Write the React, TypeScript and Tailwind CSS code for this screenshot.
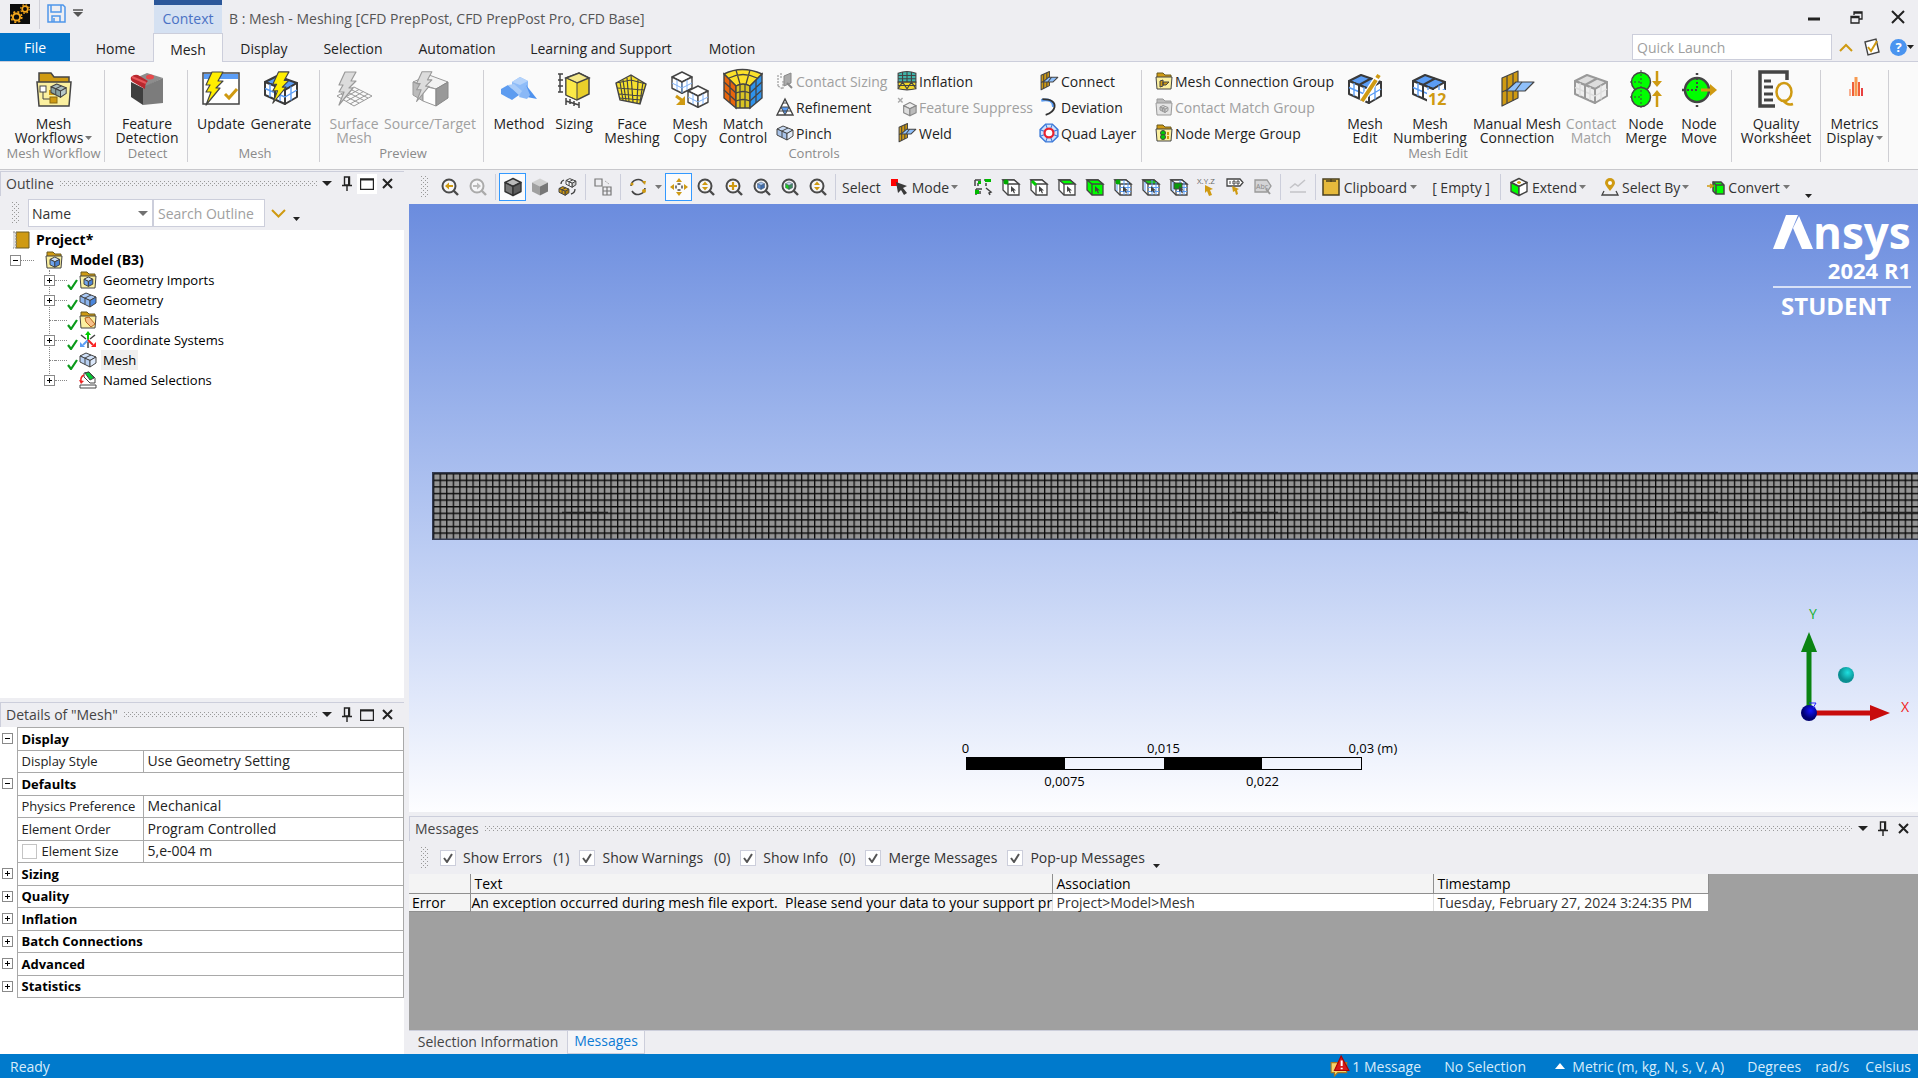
import { useId, type ReactNode } from "react";

const K = "#444444";
const GOLD = "#cf9a12";
const BLUE = "#5b9df5";
const PALE = "#fbf0a0";
const GREEN = "#00ff00";

type IconProps = { size?: string; box?: number; children: ReactNode };

function Ico({ size = "size-[18px]", box = 18, children }: IconProps) {
  return (
    <svg className={`${size} shrink-0 overflow-visible`} viewBox={`0 0 ${box} ${box}`} fill="none" aria-hidden="true">
      {children}
    </svg>
  );
}

function Big({ children }: { children: ReactNode }) {
  return (
    <Ico size="size-[38px]" box={38}>
      {children}
    </Ico>
  );
}

type CubeProps = { x?: number; y?: number; s?: number; top?: string; left?: string; right?: string; line?: string; w?: number };

function Cube({ x = 0, y = 0, s = 1, top = "#ddd", left = "#bbb", right = "#888", line = K, w = 1 }: CubeProps) {
  return (
    <g transform={`translate(${x} ${y}) scale(${s})`} stroke={line} strokeWidth={w / s} strokeLinejoin="round">
      <path d="M8 0 16 4 8 8 0 4Z" fill={top} />
      <path d="M0 4 8 8V17L0 13Z" fill={left} />
      <path d="M16 4 8 8V17L16 13Z" fill={right} />
    </g>
  );
}

function Brick({ x = 0, y = 0, s = 1, top = "#cfe0f8", left = "#b8d0f2", right = "#dce8fa", line = K, w = 1 }: CubeProps) {
  return (
    <g transform={`translate(${x} ${y}) scale(${s})`} stroke={line} strokeWidth={w / s} strokeLinejoin="round">
      <path d="M0 4 6 1 16 5 10 8.500Z" fill={top} />
      <path d="M0 4 10 8.500V15L0 10Z" fill={left} />
      <path d="M16 5V11L10 15V8.500Z" fill={right} />
      <path d="M5 6 11 3M5 6V12.500" />
    </g>
  );
}

function Folder({ children, gray }: { children?: ReactNode; gray?: boolean }) {
  return (
    <Ico>
      <path d="M2 6V1H8L10 3H16V6" fill={gray ? "#bbb" : GOLD} stroke={gray ? "#999" : "#6b5a20"} />
      <path d="M1 5H17L16 17H2Z" fill={gray ? "#e4e4e4" : PALE} stroke={gray ? "#999" : K} />
      {children}
    </Ico>
  );
}

function Bolt({ gray }: { gray?: boolean }) {
  return (
    <path
      d="M10 2H21L16 11H21L14 18H18L4 35L9 22H4L8 15H4Z"
      fill={gray ? "#dcdcdc" : "#ffee00"}
      stroke={gray ? "#999" : K}
      strokeWidth="1.2"
      strokeLinejoin="round"
    />
  );
}

function MeshBlock({ x = 0, y = 0, gray, children }: { x?: number; y?: number; gray?: boolean; children?: ReactNode }) {
  const c = gray ? "#999" : "#3a3a3a";
  const f = gray ? "#ddd" : BLUE;
  return (
    <g transform={`translate(${x} ${y})`} strokeLinejoin="round">
      <path d="M2 8 14 2 34 9 22 16Z" fill={f} stroke={c} strokeWidth="2" />
      <path d="M2 8 22 16V30L2 21Z" fill={gray ? "#eee" : "#fff"} stroke={c} strokeWidth="2" />
      <path d="M34 9V23L22 30V16Z" fill={gray ? "#eee" : "#fff"} stroke={c} strokeWidth="2" />
      <path d="M2 14.500 22 23M7 10V23M17 14V27M28 12.500V26.500M22 23 34 16" stroke={f} strokeWidth="1.400" />
      <path d="M12 12 24 5.500M12 12V25.500" stroke={c} strokeWidth="2" />
      {children}
    </g>
  );
}

function Plates({ small }: { small?: boolean }) {
  return (
    <g transform={small ? "scale(.47)" : undefined} stroke={K} strokeWidth={small ? 2 : 1.2} strokeLinejoin="round">
      <path d="M4 8 20 1V28L4 36Z" fill={GOLD} />
      <path d="M9 6V33M15 3.500V30.500M4 22 20 15" />
      <path d="M8 21 18 12H36L27 21Z" fill="#8fc0fb" />
      <path d="M17 21 24 12" />
    </g>
  );
}

function Lens({ children, gray }: { children?: ReactNode; gray?: boolean }) {
  const c = gray ? "#aaa" : "#4a4a4a";
  return (
    <Ico>
      <circle cx="8" cy="8" r="6.500" stroke={c} strokeWidth="2" fill="#f6f6f8" />
      <path d="M12.500 12.500 17 17" stroke={c} strokeWidth="2.400" />
      {children}
    </Ico>
  );
}

function SelBox({ children, fill = "#fff", top, grid }: { children?: ReactNode; fill?: string; top?: string; grid?: boolean }) {
  return (
    <Ico>
      <path d="M1 2H12L17 6V17H6L1 12Z" fill={fill} stroke={K} strokeWidth="1.300" />
      <path d="M1 2H12L17 6H6Z" fill={top ?? fill} stroke={K} strokeWidth="1.300" />
      <path d="M6 6V17" stroke={K} strokeWidth="1.300" />
      {grid && <path d="M6 9.500H17M6 13.500H17M10 2V17M14 4V17M3 4V13" stroke={BLUE} />}
      {children}
      <path d="M9 8V14L10.500 12.800 12 15.500 13 15 11.800 12.500H14Z" fill={K} />
    </Ico>
  );
}

function Caret({ light }: { light?: boolean }) {
  return (
    <svg className="h-[4px] w-[7px] shrink-0" viewBox="0 0 7 4" aria-hidden="true">
      <path d="M0 0H7L3.500 4Z" fill={light ? "#777" : "#222"} />
    </svg>
  );
}

function Dots({ className }: { className: string }) {
  const id = useId();
  return (
    <svg className={className} aria-hidden="true">
      <defs>
        <pattern id={id} width="4" height="4" patternUnits="userSpaceOnUse">
          <rect width="1" height="1" fill="#999" />
          <rect x="2" y="2" width="1" height="1" fill="#999" />
        </pattern>
      </defs>
      <rect width="100%" height="100%" fill={`url(#${id})`} />
    </svg>
  );
}

function BigButton({ icon, lines, width, off, menu }: { icon: ReactNode; lines: string[]; width: string; off?: boolean; menu?: boolean }) {
  return (
    <button
      type="button"
      disabled={off}
      className={`${width} flex h-[80px] shrink-0 flex-col items-center whitespace-nowrap text-[14px] leading-[14px] ${off ? "text-[#a0a0a0]" : "text-[#1e1e1e]"}`}
    >
      <span className="mb-[9px]">{icon}</span>
      {lines.map((l, i) => (
        <span key={l} className="flex items-center gap-[2px]">
          {l}
          {menu && i === lines.length - 1 && <Caret light />}
        </span>
      ))}
    </button>
  );
}

function SmallButton({ icon, label, off }: { icon: ReactNode; label: string; off?: boolean }) {
  return (
    <button type="button" disabled={off} className={`flex h-[26px] items-center gap-[2px] whitespace-nowrap text-[14px] ${off ? "text-[#a0a0a0]" : "text-[#1e1e1e]"}`}>
      {icon}
      {label}
    </button>
  );
}

function Group({ label, width, children, className = "" }: { label?: string; width: string; children: ReactNode; className?: string }) {
  return (
    <section className={`${width} flex h-[92px] shrink-0 flex-col border-r border-[#cfcfd4]`} aria-label={label}>
      <div className={`flex h-[75px] ${className}`}>{children}</div>
      <div className="pl-[3px] text-center text-[13px] leading-[16px] whitespace-nowrap text-[#8a8a8a]">{label}</div>
    </section>
  );
}

const folderIcon = (
  <Big>
    <path d="M4 13V3H16L19 7H34V13" fill={GOLD} stroke={K} strokeWidth="1.500" />
    <path d="M2 12H36L34 36H4Z" fill={PALE} stroke={K} strokeWidth="1.500" />
    <rect x="5" y="16" width="6" height="6" fill="#fff" stroke={K} />
    <path d="M8 22V29H15" stroke={K} />
    <rect x="15" y="27" width="7" height="6" fill={GOLD} stroke="#8a6a10" />
    <rect x="14" y="20" width="6" height="5" fill={GOLD} />
    <Brick x={16} y={13} s={0.95} top="#a9bcbc" left="#8aa3a3" right="#b9c9c9" />
  </Big>
);
const featureIcon = (
  <Big>
    <path d="M3 10 19 3 35 8 17 17Z" fill="#8d8d8d" />
    <path d="M3 12 15 18V35L3 27Z" fill="#3f3f3f" />
    <path d="M15 17 35 8V33L15 35Z" fill="#7c7c7c" />
    <path d="M3 7Q6 4 10 5L20 11Q17 13 17 19L5 12Q2 10 3 7Z" fill="#b8282e" />
    <path d="M4 7 18 13" stroke="#e8575b" strokeWidth="2" />
    <ellipse cx="22" cy="7" rx="4" ry="2.500" fill="#e8494c" />
  </Big>
);
const updateIcon = (
  <Big>
    <rect x="1" y="3" width="36" height="31" fill="#fff" stroke={K} strokeWidth="1.500" />
    <path d="M2 4H36V9H2Z" fill={BLUE} />
    <path d="m23 24 4 4 8-9" stroke={GOLD} strokeWidth="3" />
    <Bolt />
  </Big>
);
const generateIcon = (
  <Big>
    <MeshBlock x={1} y={4} />
    <g transform="translate(7 0) scale(.95)">
      <Bolt />
    </g>
  </Big>
);
const surfaceIcon = (
  <Big>
    <path d="M2 26 19 17 37 26 19 36ZM6 24 24 33M11 21.500 29 30.500M15 19 33 28M7 29 24 19.500M11 31.500 28.500 21.500M15 34 33 24" stroke="#999" />
    <Bolt gray />
  </Big>
);
const sourceIcon = (
  <Big>
    <path d="M2 12 18 5 37 12 25 19Z" fill="#f3f3f3" stroke="#999" />
    <path d="M2 12 12 16V31L2 25Z" fill="#bbb" stroke="#999" />
    <path d="M12 16 25 19V36L12 31Z" fill="#fff" stroke="#999" />
    <path d="M37 12V28L25 36V19Z" fill="#999" stroke="#888" />
    <g transform="translate(2 0) scale(.9)">
      <Bolt gray />
    </g>
  </Big>
);
const methodIcon = (
  <Big>
    <path d="M12 12 20 7 28 11V22L20 26 12 22Z" fill="#8ebcf8" />
    <path d="M12 12 20 7 28 11 20 15Z" fill="#b5d3fa" />
    <path d="M1 19 8 15 19 25 12 30 1 24Z" fill="#5d9cf0" />
    <path d="M8 15 19 25 22 21 14 14Z" fill="#a9ccf9" />
    <path d="M26 15 37 29 27 27Z" fill="#4f92ee" />
    <path d="M26 15 19 27 27 29 30 25Z" fill="#8ab8f6" />
  </Big>
);
const sizingIcon = (
  <Big>
    <path d="M11 8 24 3 34 8V24L22 30 11 25Z" fill="#e9cf2a" stroke={K} strokeWidth="1.500" />
    <path d="M11 8 24 3 34 8 22 13Z" fill="#f5e98a" stroke={K} strokeWidth="1.500" />
    <path d="M11 8 22 13V30L11 25Z" fill="#fbe947" stroke={K} />
    <path d="M3 4H8M3 10H8M3 16H8M3 22H8M5 4V22M11 28V35M15 29V34M19 31V36M24 32V38M11 31 24 35" stroke={K} strokeWidth="1.500" />
  </Big>
);
const faceIcon = (
  <Big>
    <path d="M18 5 33 14 27 34 7 30 3 13Z" fill="#f6e02c" stroke={K} strokeWidth="1.400" />
    <path d="M4 18 31 20M5 24 29 26M10 10 13 31M18 5 20 32M25 10 24 33M3 13 18 10 33 14M6 28 28 30M14 8 16 32M30 12 27 33M7 12 10 30" stroke={K} strokeWidth="1.200" />
  </Big>
);
const copyIcon = (
  <Big>
    <Cube x={1} y={2} s={1.25} top="#fff" left="#fff" right="#fff" w={1.4} />
    <path d="M6 10V20M11 13V23M16 10V20M1 13 11 18 21 13" stroke="#7fb2f7" />
    <Cube x={17} y={16} s={1.25} top="#fff" left="#fff" right="#fff" w={1.4} />
    <path d="M22 24V34M32 24V34M17 27 27 32 37 27" stroke="#7fb2f7" />
    <path d="M5 26 12 31" stroke={GOLD} strokeWidth="3" />
    <path d="M14 26V35H5Z" fill={GOLD} />
  </Big>
);
const matchIcon = (
  <Ico size="size-[42px]" box={42}>
    <path d="M2 6Q20-3 40 6L28 18Q21 15 14 18Z" fill="#fbe12a" stroke={K} strokeWidth="1.400" />
    <path d="M2 6 14 18V40L2 30Z" fill="#e8650c" stroke={K} strokeWidth="1.400" />
    <path d="M14 18Q21 14 28 18V40H14Z" fill="#d9c424" stroke={K} strokeWidth="1.400" />
    <path d="M40 6V30L28 40V18Z" fill="#2f92ea" stroke={K} strokeWidth="1.400" />
    <path d="M2 14 14 25Q21 22 28 25L40 14M2 22 14 33Q21 30 28 33L40 22M8 12V35M34 12V35M18 16V40M23 16V40M7 10Q21 3 35 10M14 2 18 16M28 2 24 16" stroke={K} strokeWidth="1.300" />
  </Ico>
);
const nodeMergeIcon = (
  <Big>
    <circle cx="14" cy="12" r="9.500" fill={GREEN} stroke={K} strokeWidth="1.500" />
    <circle cx="14" cy="27" r="9.500" fill={GREEN} stroke={K} strokeWidth="1.500" />
    <path d="M14 0V38M3 12H14M3 27H14" stroke={K} strokeDasharray="2 2" />
    <path d="M30 1V12M30 37V25" stroke={GOLD} strokeWidth="2.500" />
    <path d="M25 11H35L30 17ZM25 26H35L30 20Z" fill={GOLD} />
  </Big>
);
const nodeMoveIcon = (
  <Big>
    <circle cx="17" cy="20" r="12" fill={GREEN} stroke={K} strokeWidth="2.500" />
    <path d="M17 8V20H7" stroke={K} strokeWidth="2" strokeDasharray="2 2" />
    <path d="M2 20H4M17 3V5M17 35V37" stroke={K} strokeWidth="2.500" />
    <path d="M21 20H31" stroke={GOLD} strokeWidth="3" />
    <path d="M30 14 37 20 30 26Z" fill={GOLD} />
  </Big>
);
const qualityIcon = (
  <Big>
    <path d="M30 10V2H3V36H18" stroke={K} strokeWidth="3.500" />
    <path d="M7 11H14M7 17H16M7 24H16M7 30H16" stroke={K} strokeWidth="3" />
    <ellipse cx="27" cy="22" rx="7.500" ry="9" stroke={GOLD} strokeWidth="2.500" fill="#fafafa" />
    <path d="M26 30Q30 36 36 34" stroke={GOLD} strokeWidth="2.500" />
  </Big>
);
const metricsIcon = (
  <Big>
    <path d="M14 19V26" stroke="#f9b090" strokeWidth="2" />
    <path d="M17 12V26M23 12V26" stroke="#f0603a" strokeWidth="2" />
    <path d="M20 7V26" stroke="#f79a50" strokeWidth="3" />
    <path d="M26 18V26" stroke="#e84040" strokeWidth="2" />
  </Big>
);

const tb = "flex h-[28px] w-[28px] shrink-0 items-center justify-center";
const tbOn = "flex h-[28px] w-[27px] shrink-0 items-center justify-center border border-[#3399ff] bg-[#fbfbfc]";
const tbText = "flex h-[28px] shrink-0 items-center whitespace-nowrap text-[14px] text-[#333]";

function Tool({ label, on, children }: { label: string; on?: boolean; children: ReactNode }) {
  return (
    <button type="button" aria-label={label} aria-pressed={on} className={on ? tbOn : tb}>
      {children}
    </button>
  );
}

function Sep() {
  return <span className="mx-[3px] h-[26px] w-px shrink-0 bg-[#cccedb]" />;
}

function Overflow() {
  return (
    <button type="button" aria-label="Toolbar options" className="flex h-[24px] w-[20px] items-end justify-center pb-[4px]">
      <Caret />
    </button>
  );
}

function PanelHeader({ title, max, tint }: { title: string; max?: boolean; tint?: boolean }) {
  return (
    <header className={`flex h-[25px] shrink-0 items-center border-t border-l border-[#cccedb] pb-px pl-[5px] text-[14px] text-[#444] ${max ? "pr-[7px]" : "pr-[5px]"}`}>
      <h2 className="mr-[6px] whitespace-nowrap">{title}</h2>
      <Dots className="h-[5px] min-w-0 flex-1" />
      <button type="button" aria-label="Window position" className="flex h-[20px] w-[20px] items-center justify-center">
        <svg className="h-[5px] w-[10px]" viewBox="0 0 10 5"><path d="M0 0H10L5 5Z" fill="#222" /></svg>
      </button>
      <button type="button" aria-label="Auto hide" className="flex h-[20px] w-[20px] items-center justify-center">
        <svg className="h-[15px] w-[10px]" viewBox="0 0 10 15" fill="none" stroke="#222" strokeWidth="1.400"><path d="M2.500 1H7.500V9H2.500ZM0 9.500H10M5 10V15M6.700 1V9" /></svg>
      </button>
      {max && (
        <button type="button" aria-label="Maximize" className={`flex h-[20px] w-[20px] items-center justify-center ${tint ? "bg-white" : ""}`}>
          <svg className="h-[12px] w-[14px]" viewBox="0 0 14 12" fill="none"><path d="M.6 1H13.400V11.400H.6Z" stroke="#222" strokeWidth="1.200" /><path d="M0 1.500H14" stroke="#222" strokeWidth="2" /></svg>
        </button>
      )}
      <button type="button" aria-label="Close" className="flex h-[20px] w-[20px] items-center justify-center">
        <svg className="size-[11px]" viewBox="0 0 11 11"><path d="M1 1 10 10M10 1 1 10" stroke="#222" strokeWidth="2" /></svg>
      </button>
    </header>
  );
}

function Expander({ open }: { open?: boolean }) {
  return (
    <button type="button" aria-label={open ? "Collapse" : "Expand"} className="size-[11px] shrink-0 border border-[#8a8a8a] bg-white">
      <svg className="size-[9px]" viewBox="0 0 9 9"><path d={open ? "M2 4.500H7" : "M2 4.500H7M4.500 2V7"} stroke="#000" /></svg>
    </button>
  );
}

const tree: { label: string; plus: boolean; check: boolean; active?: boolean; icon: ReactNode }[] = [
  { label: "Geometry Imports", plus: true, check: true, icon: <Folder><Cube x={5} y={6} s={0.55} top="#cfe0f8" left="#6fa4ee" right="#4a83d6" /></Folder> },
  { label: "Geometry", plus: true, check: true, icon: <Ico><Brick x={1} y={1} top="#a9c9f6" left="#8db6ef" right="#4a86dc" /></Ico> },
  { label: "Materials", plus: false, check: true, icon: <Folder><path d="M6 7 10 6 16 13 12 16 7 11Z" fill="#f6c08a" stroke="#b5651d" /></Folder> },
  {
    label: "Coordinate Systems", plus: true, check: true,
    icon: <Ico><path d="M9 9V2" stroke="#0c0" strokeWidth="2" /><path d="M6 4H12L9 0Z" fill="#0c0" /><path d="M9 9 4 14" stroke={BLUE} strokeWidth="2" /><path d="M1 11 6 16H1Z" fill={BLUE} /><path d="M9 9 14 14" stroke="#e22" strokeWidth="2" /><path d="M17 11 12 16H17Z" fill="#f22" /><path d="M2 4 7 8M16 4 11 8M9 11V17" stroke={K} strokeWidth="1.500" /></Ico>,
  },
  { label: "Mesh", plus: false, check: true, active: true, icon: <Ico><Brick x={1} y={1} /></Ico> },
  {
    label: "Named Selections", plus: true, check: false,
    icon: <Ico><path d="M1 14H17V17H1Z" fill="#fff" stroke={K} /><path d="M5 2 10 1 16 7V12H11L5 6Z" fill="#fff" stroke={K} /><path d="M6 2 10 1 15 7 11 9Z" fill="#0c3" stroke={K} /><path d="M5 4Q1 6 2 11" stroke="#e22" strokeWidth="1.500" /><path d="M0 9 2 13 5 10Z" fill="#e22" /></Ico>,
  },
];

type Detail = { head?: string; open?: boolean; name?: string; value?: string; box?: boolean };
const details: Detail[] = [
  { head: "Display", open: true },
  { name: "Display Style", value: "Use Geometry Setting" },
  { head: "Defaults", open: true },
  { name: "Physics Preference", value: "Mechanical" },
  { name: "Element Order", value: "Program Controlled" },
  { name: "Element Size", value: "5,e-004 m", box: true },
  { head: "Sizing" },
  { head: "Quality" },
  { head: "Inflation" },
  { head: "Batch Connections" },
  { head: "Advanced" },
  { head: "Statistics" },
];

function TitleBar() {
  return (
    <div className="flex h-[33px] shrink-0 items-stretch">
      <div className="flex w-[154px] items-start pl-[10px]">
        <svg className="mt-[4px] size-[20px]" viewBox="0 0 20 20" fill="none">
          <rect width="20" height="20" fill="#0c0c0c" />
          <circle cx="6.500" cy="13" r="3.600" stroke="#f2a51c" strokeWidth="2" />
          <circle cx="6.500" cy="13" r="5.300" stroke="#f2a51c" strokeWidth="1.600" strokeDasharray="2 2.200" />
          <circle cx="15" cy="5" r="2.800" stroke="#f2a51c" strokeWidth="1.700" />
          <circle cx="15" cy="5" r="4.300" stroke="#f2a51c" strokeWidth="1.200" strokeDasharray="1.600 1.800" />
        </svg>
        <span className="ml-[9px] h-[29px] w-px bg-[#d0d0d8]" />
        <button type="button" aria-label="Save" className="mt-[4px] ml-[7px]">
          <svg className="size-[19px]" viewBox="0 0 19 19" fill="none" stroke="#4f97ea" strokeWidth="1.500"><path d="M1 1H16L18 3V18H1ZM4 1V8H14V1M5 18V12H13V18M7 14V18" /></svg>
        </button>
        <button type="button" aria-label="Customize quick access" className="mt-[9px] ml-[7px]">
          <svg className="h-[8px] w-[10px]" viewBox="0 0 10 8"><path d="M0 1H10" stroke="#555" strokeWidth="1.500" /><path d="M0 3H10L5 8Z" fill="#555" /></svg>
        </button>
      </div>
      <div className="flex w-[68px] items-center justify-center border-t-[5px] border-[#2b579a] bg-[#d5e1f2] pb-[2px] text-[14px] text-[#4a72c4]">Context</div>
      <h1 className="flex items-center pt-[3px] pl-[7px] text-[14px] text-[#555]">B : Mesh - Meshing [CFD PrepPost, CFD PrepPost Pro, CFD Base]</h1>
      <div className="ml-auto flex items-center">
        <button type="button" aria-label="Minimize" className="flex w-[43px] justify-center"><svg className="h-[12px] w-[12px]" viewBox="0 0 12 12"><path d="M0 8H12" stroke="#222" strokeWidth="3" /></svg></button>
        <button type="button" aria-label="Restore" className="flex w-[43px] justify-center pt-[2px]"><svg className="size-[13px]" viewBox="0 0 13 13" fill="none" stroke="#222" strokeWidth="1.300"><path d="M4 4V1H12V8H9M1 5.500H9V12H1ZM1 6.500H9M4 2H12" /></svg></button>
        <button type="button" aria-label="Close window" className="flex w-[40px] justify-center"><svg className="size-[14px]" viewBox="0 0 14 14"><path d="M1 1 13 13M13 1 1 13" stroke="#222" strokeWidth="2" /></svg></button>
      </div>
    </div>
  );
}

function TabRow() {
  const t = "flex items-center justify-center whitespace-nowrap pt-[2px] text-[14px] text-[#222]";
  return (
    <nav className="flex h-[29px] shrink-0 border-b border-[#cccedb]" aria-label="Ribbon tabs">
      <button type="button" className="mr-[8px] w-[70px] bg-[#0173c7] text-[14px] text-white">File</button>
      <button type="button" className={`w-[75px] ${t}`}>Home</button>
      <button type="button" className={`-mb-px w-[70px] border-x border-t border-[#cccedb] bg-[#fafafa] ${t}`}>Mesh</button>
      <button type="button" className={`w-[82px] ${t}`}>Display</button>
      <button type="button" className={`w-[96px] ${t}`}>Selection</button>
      <button type="button" className={`w-[112px] ${t}`}>Automation</button>
      <button type="button" className={`w-[176px] ${t}`}>Learning and Support</button>
      <button type="button" className={`w-[86px] ${t}`}>Motion</button>
      <div className="ml-auto flex items-center pr-[4px]">
        <input aria-label="Quick Launch" placeholder="Quick Launch" className="mr-[5px] h-[26px] w-[200px] border border-[#cccedb] bg-white px-[4px] text-[14px] outline-none placeholder:text-[#a0a0a0]" />
        <button type="button" aria-label="Collapse ribbon" className="flex w-[18px] justify-center"><svg className="h-[9px] w-[14px]" viewBox="0 0 14 9" fill="none"><path d="M1 8 7 2 13 8" stroke={GOLD} strokeWidth="2" /></svg></button>
        <button type="button" aria-label="Options" className="ml-[8px]">
          <Ico><path d="M2 4 13 1 16 14 5 17Z" stroke={K} strokeWidth="1.400" fill="#fff" /><path d="m5 9 3 4 6-10" stroke={GOLD} strokeWidth="2" /></Ico>
        </button>
        <button type="button" aria-label="Help" className="ml-[9px] flex items-center">
          <span className="flex size-[17px] items-center justify-center rounded-full bg-[#4a94f0] text-[13px] leading-none font-bold text-white">?</span>
          <Caret />
        </button>
      </div>
    </nav>
  );
}

function Ribbon() {
  return (
    <div className="flex h-[108px] shrink-0 overflow-hidden border-b border-[#c8c8cc] bg-[#fafafa] pt-[8px]">
      <Group label="Mesh Workflow" width="w-[105px]" className="justify-center pl-[3px]">
        <BigButton icon={folderIcon} lines={["Mesh", "Workflows"]} width="w-[100px]" menu />
      </Group>
      <Group label="Detect" width="w-[83px]" className="justify-center pl-[2px]">
        <BigButton icon={featureIcon} lines={["Feature", "Detection"]} width="w-[80px]" />
      </Group>
      <Group label="Mesh" width="w-[132px]" className="pl-[3px]">
        <BigButton icon={updateIcon} lines={["Update"]} width="w-[60px]" />
        <BigButton icon={generateIcon} lines={["Generate"]} width="w-[60px]" />
      </Group>
      <Group label="Preview" width="w-[164px]" className="pl-[4px]">
        <BigButton icon={surfaceIcon} lines={["Surface", "Mesh"]} width="w-[60px]" off />
        <BigButton icon={sourceIcon} lines={["Source/Target"]} width="w-[92px]" off />
      </Group>
      <Group label="Controls" width="w-[658px]" className="pl-[5px]">
        <BigButton icon={methodIcon} lines={["Method"]} width="w-[60px]" />
        <BigButton icon={sizingIcon} lines={["Sizing"]} width="w-[50px]" />
        <BigButton icon={faceIcon} lines={["Face", "Meshing"]} width="w-[66px]" />
        <BigButton icon={copyIcon} lines={["Mesh", "Copy"]} width="w-[50px]" />
        <BigButton icon={<span className="-mt-[2px] -mb-[2px] block">{matchIcon}</span>} lines={["Match", "Control"]} width="w-[56px]" />
        <div className="-mt-[2px] ml-[5px] w-[121px] shrink-0">
          <SmallButton off label="Contact Sizing" icon={<Ico><path d="M2 3V14M2 14 7 17V9M5 1V7" stroke="#aaa" strokeWidth="1.400" strokeDasharray="2 1" /><path d="M8 4 15 1V11L8 14Z" fill="#aaa" stroke="#888" /><path d="m11 11 5 5" stroke="#888" strokeWidth="2" /></Ico>} />
          <SmallButton label="Refinement" icon={<Ico><path d="M9 1 17 17H1Z" fill="#fff" stroke={K} strokeWidth="1.400" /><path d="M5 9H13L9 17Z" fill={BLUE} stroke={K} /><path d="M7 5H11M3 13H15" stroke={K} /></Ico>} />
          <SmallButton label="Pinch" icon={<Ico><Brick x={1} y={1} top="#c9dbf3" left="#a9c4ea" right="#e2ebf8" /></Ico>} />
        </div>
        <div className="-mt-[2px] w-[142px] shrink-0">
          <SmallButton label="Inflation" icon={<Ico size="size-[20px]"><path d="M1 2Q9-1 17 2V10H1Z" fill="#3fb6ac" stroke={K} /><path d="M1 10H17V16Q9 18 1 16Z" fill="#f2d826" stroke={K} /><path d="M1 4H17M1 7H17M5 1V10M9 1V10M13 1V10M1 16 5 10 9 16 13 10 17 16M1 13H17" stroke={K} /></Ico>} />
          <SmallButton off label="Feature Suppress" icon={<Ico size="size-[20px]"><path d="m1 1 4 4M5 1 1 5" stroke="#aaa" strokeWidth="1.300" /><Cube x={6} y={5} s={0.7} top="#eee" left="#ddd" right="#bbb" line="#888" /></Ico>} />
          <SmallButton label="Weld" icon={<Ico size="size-[20px]"><Plates small /></Ico>} />
        </div>
        <div className="-mt-[2px] shrink-0">
          <SmallButton label="Connect" icon={<Ico size="size-[20px]"><Plates small /></Ico>} />
          <SmallButton label="Deviation" icon={<Ico size="size-[20px]"><path d="M2 3Q13 1 13 9" stroke={BLUE} strokeWidth="2.500" /><path d="M3 2Q15 2 14 9 13 14 6 16" stroke="#333" strokeWidth="1.600" /></Ico>} />
          <SmallButton label="Quad Layer" icon={<Ico size="size-[20px]"><path d="M6 1H12L17 6V12L12 17H6L1 12V6Z" fill="#cfe2fc" stroke="#3a78d8" strokeWidth="1.300" /><path d="M6 1 12 17M12 1 6 17M1 6 17 12M1 12 17 6" stroke="#3a78d8" /><circle cx="9" cy="9" r="4" fill="#fff" stroke="#e8222e" strokeWidth="2" /></Ico>} />
        </div>
      </Group>
      <Group label="Mesh Edit" width="w-[590px]" className="pl-[13px]">
        <div className="-mt-[2px] w-[183px] shrink-0">
          <SmallButton label="Mesh Connection Group" icon={<Folder><path d="M5 9 8 8V14L5 15ZM8 10H14L11 13H8Z" fill={GOLD} stroke={K} /></Folder>} />
          <SmallButton off label="Contact Match Group" icon={<Folder gray><Brick x={5} y={7} s={0.5} top="#ddd" left="#bbb" right="#ccc" line="#999" /></Folder>} />
          <SmallButton label="Node Merge Group" icon={<Folder><circle cx="8" cy="9" r="2.500" fill="#0c0" stroke={K} /><circle cx="8" cy="13" r="2.500" fill="#0c0" stroke={K} /><path d="M13 8V15" stroke={GOLD} strokeWidth="2" strokeDasharray="3 1" /></Folder>} />
        </div>
        <BigButton icon={<Big><MeshBlock x={1} y={3} /><path d="M16 31 31 8" stroke="#fff" strokeWidth="6" /><path d="M16 31 30 10M31 8 33 5" stroke={GOLD} strokeWidth="4" /></Big>} lines={["Mesh", "Edit"]} width="w-[54px]" />
        <BigButton icon={<Big><MeshBlock x={0} y={3} /><rect x="16" y="20" width="22" height="17" fill="#fafafa" /><text x="17" y="35" fontSize="16" fontWeight="700" fontFamily="Open Sans, sans-serif" fill={GOLD}>12</text></Big>} lines={["Mesh", "Numbering"]} width="w-[76px]" />
        <BigButton icon={<Big><Plates /></Big>} lines={["Manual Mesh", "Connection"]} width="w-[98px]" />
        <BigButton icon={<Big><MeshBlock x={1} y={3} gray /></Big>} lines={["Contact", "Match"]} width="w-[50px]" off />
        <BigButton icon={nodeMergeIcon} lines={["Node", "Merge"]} width="w-[60px]" />
        <BigButton icon={nodeMoveIcon} lines={["Node", "Move"]} width="w-[46px]" />
      </Group>
      <Group width="w-[89px]" className="justify-center">
        <BigButton icon={qualityIcon} lines={["Quality", "Worksheet"]} width="w-[80px]" />
      </Group>
      <Group width="w-[68px]" className="justify-center">
        <BigButton icon={metricsIcon} lines={["Metrics", "Display"]} width="w-[60px]" menu />
      </Group>
    </div>
  );
}

function Outline() {
  return (
    <section className="flex min-h-0 flex-1 flex-col pt-px" aria-label="Outline">
      <PanelHeader title="Outline" max tint />
      <div className="flex h-[34px] shrink-0 items-center pl-[12px]">
        <Dots className="mr-[9px] h-[22px] w-[7px]" />
        <div className="relative">
          <select aria-label="Filter by" className="h-[28px] w-[125px] appearance-none border border-[#cccedb] bg-white pl-[3px] text-[14px] text-[#333]">
            <option>Name</option>
          </select>
          <span className="pointer-events-none absolute top-[12px] right-[5px]"><svg className="h-[5px] w-[10px]" viewBox="0 0 10 5"><path d="M0 0H10L5 5Z" fill="#717171" /></svg></span>
        </div>
        <input aria-label="Search Outline" placeholder="Search Outline" className="h-[28px] w-[112px] border border-[#cccedb] bg-white px-[4px] text-[14px] outline-none placeholder:text-[#a0a0a0]" />
        <button type="button" aria-label="Expand all" className="ml-[6px]"><svg className="h-[9px] w-[15px]" viewBox="0 0 15 9" fill="none"><path d="M1 1 7.500 7.500 14 1" stroke={GOLD} strokeWidth="2" /></svg></button>
        <Overflow />
      </div>
      <ul className="min-h-0 flex-1 overflow-hidden bg-white text-[13px] leading-[20px] text-black">
        <li>
          <div className="flex h-[20px] items-center pl-[12px] text-[14px] font-bold">
            <Ico><path d="M4 1H17V17H4Z" fill={GOLD} stroke="#6b5a20" /><path d="M1 1H4V17H1" fill="#ddd" stroke="#888" strokeDasharray="2 1" /></Ico>
            <span className="ml-[6px]">Project*</span>
          </div>
          <ul>
            <li>
              <div className="flex h-[20px] items-center pl-[10px] text-[14px] font-bold">
                <Expander open />
                <span className="mr-[11px] w-[13px] border-t border-dotted border-[#888]" />
                <Folder><Cube x={5} y={6} s={0.6} top="#cfe0f8" left="#6fa4ee" right="#4a83d6" /></Folder>
                <span className="ml-[7px]">Model (B3)</span>
              </div>
              <ul className="relative">
                <span className="absolute top-0 left-[49px] h-[110px] border-l border-dotted border-[#888]" />
                {tree.map((n) => (
                  <li key={n.label} className="relative flex h-[20px] items-center pl-[44px]">
                    {n.plus ? <Expander /> : <span className="ml-[5px] w-[6px] border-t border-dotted border-[#888]" />}
                    <span className="w-[12px] border-t border-dotted border-[#888]" />
                    <span className="flex w-[12px] self-end">
                      {n.check && <svg className="h-[11px] w-[11px]" viewBox="0 0 11 11" fill="none"><path d="m1 6 3 4 6-9" stroke="#0a9a1a" strokeWidth="2.200" /></svg>}
                    </span>
                    {n.icon}
                    <span className={`ml-[4px] px-[2px] ${n.active ? "bg-[#efefef]" : ""}`}>{n.label}</span>
                  </li>
                ))}
              </ul>
            </li>
          </ul>
        </li>
      </ul>
    </section>
  );
}

function Details() {
  const line = "border border-[#a9a9a9]";
  return (
    <section className="flex h-[352px] shrink-0 flex-col" aria-label="Details">
      <PanelHeader title={'Details of "Mesh"'} max />
      <div className="min-h-0 flex-1 bg-white">
        <table className="h-[271px] w-full table-fixed border-collapse text-[13px] leading-[18px] text-[#222]">
          <colgroup>
            <col className="w-[17px]" />
            <col className="w-[126px]" />
            <col />
          </colgroup>
          <tbody>
            {details.map((d) => (
              <tr key={d.head ?? d.name}>
                <td className="p-0">{d.head && <span className="flex pl-[2px]"><Expander open={d.open} /></span>}</td>
                {d.head ? (
                  <th colSpan={2} scope="rowgroup" className={`${line} py-0 pl-[4px] text-left font-bold text-black`}>{d.head}</th>
                ) : (
                  <>
                    <th scope="row" className={`${line} py-0 pl-[4px] text-left font-normal whitespace-nowrap`}>
                      {d.box ? (
                        <label className="flex items-center gap-[5px]">
                          <input type="checkbox" className="size-[15px] appearance-none border border-[#c4c4c4] bg-white" />
                          {d.name}
                        </label>
                      ) : (
                        d.name
                      )}
                    </th>
                    <td className={`${line} py-0 pl-[4px] text-[14px]`}>{d.value}</td>
                  </>
                )}
              </tr>
            ))}
          </tbody>
        </table>
      </div>
    </section>
  );
}

function GraphicsToolbar() {
  const grn = <circle cx="4" cy="4" r="2.500" fill="#0a0" />;
  return (
    <div className="flex h-[34px] shrink-0 items-center overflow-hidden pl-[12px]" role="toolbar" aria-label="Graphics">
      <Dots className="mr-[8px] h-[22px] w-[7px] shrink-0" />
      <Tool label="Zoom previous"><Lens><path d="M4 8 8 4.500V7H12V9H8V11.500Z" fill={GOLD} /></Lens></Tool>
      <Tool label="Zoom next"><Lens gray><path d="M12 8 8 4.500V7H4V9H8V11.500Z" fill="#bbb" /></Lens></Tool>
      <Sep />
      <Tool label="Shaded with edges" on><Ico><Cube x={1} y={0.500} top="#bbb" left="#777" right="#5c5c5c" line="#333" w={1.400} /></Ico></Tool>
      <Tool label="Shaded"><Ico><Cube x={1} y={0.500} top="#d0d0d0" left="#a0a0a0" right="#777" line="none" /></Ico></Tool>
      <Tool label="Swap view"><Ico><Brick x={7} y={0} s={0.62} top="#eee" left="#fff" right="#ccc" /><Brick x={0} y={8} s={0.62} top={GOLD} left={GOLD} right="#a87a08" /><path d="M2 6Q2 3 5 2M16 11Q16 15 12 16" stroke={K} strokeWidth="1.300" /></Ico></Tool>
      <Sep />
      <Tool label="Show mesh"><Ico><path d="M1 1H8V8H1Z M9 9H17V17H9ZM13 9V17M9 13H17" stroke="#777" strokeWidth="1.200" /><path d="m11 3 4 3" stroke="#aaa" strokeDasharray="2 1" /></Ico></Tool>
      <Sep />
      <Tool label="Rotate"><Ico><path d="M2 8A7 7 0 0 1 15 5M16 10A7 7 0 0 1 3 13" stroke={K} strokeWidth="1.600" /><circle cx="3" cy="6" r="1.500" fill={GOLD} /><circle cx="15" cy="13" r="2" fill={GOLD} /><path d="M13 3 17 3 16 7Z" fill={GOLD} /></Ico></Tool>
      <button type="button" aria-label="Rotate options" className="flex w-[13px] justify-center"><Caret light /></button>
      <Tool label="Pan" on><Ico><path d="M9 0 12 4H6ZM9 18 12 14H6ZM0 9 4 6V12ZM18 9 14 6V12Z" fill={GOLD} /><path d="M7.500 6H10.500M7.500 12H10.500M6 7.500V10.500M12 7.500V10.500" stroke={K} strokeWidth="1.400" /></Ico></Tool>
      <Tool label="Zoom"><Lens><path d="M8 3.500 11 7H5ZM8 12.500 11 9H5Z" fill={GOLD} /></Lens></Tool>
      <Tool label="Box zoom"><Lens><path d="M8 4V12M4 8H12" stroke={GOLD} strokeWidth="2.200" /></Lens></Tool>
      <Tool label="Zoom to fit"><Lens><Cube x={4.500} y={4} s={0.440} top="#a9c9f6" left="#5b8fd8" right="#3f6cae" line="#456" w={0.500} /></Lens></Tool>
      <Tool label="Zoom to selection"><Lens><Cube x={4.500} y={4} s={0.440} top="#cde" left="#1cd01c" right="#3f8c5e" line="#456" w={0.500} /></Lens></Tool>
      <Tool label="Magnifier"><Lens><path d="M8 3.500 11 7H5ZM8 12.500 11 9H5Z" fill={GOLD} /></Lens></Tool>
      <Sep />
      <span className={`${tbText} mr-[9px] ml-[3px]`}>Select</span>
      <button type="button" className={`${tbText} w-[79px] gap-[4px]`}>
        <Ico><path d="M1 1H8V8H1Z" fill="#f00" /><path d="M6 4 17 8 13 10 17 15 14 17 11 12 8 15Z" fill="#3a3a3a" /></Ico>
        <span className="flex items-center gap-[2px]">Mode<Caret light /></span>
      </button>
      <Tool label="Selection filter"><Ico><path d="M1 2H7M1 2V8M4 5V8M10 2H17M12 5V8M2 11H8M2 11V17M6 13V16" stroke={K} strokeWidth="1.500" /><path d="M11 1H17V4H11ZM1 12H5V16H1ZM4 3H7V6H4Z" fill="#0b0" /><path d="M12 10 17 14 15 15 16 17" stroke={K} strokeWidth="1.500" /></Ico></Tool>
      <Tool label="Vertex"><SelBox>{grn}</SelBox></Tool>
      <Tool label="Edge"><SelBox><path d="M2 3 6 7" stroke="#0c0" strokeWidth="3" /></SelBox></Tool>
      <Tool label="Face"><SelBox top={GREEN} /></Tool>
      <Tool label="Body"><SelBox fill={GREEN} /></Tool>
      <Tool label="Node"><SelBox grid>{grn}</SelBox></Tool>
      <Tool label="Element face"><SelBox grid top="#1ec41e" /></Tool>
      <Tool label="Element"><SelBox grid><path d="M4 5H12V11H4Z" fill="#0a9a0a" stroke={K} /></SelBox></Tool>
      <Tool label="Hit point coordinates"><Ico size="size-[20px]" box={20}><text x="0" y="7" fontSize="8" fontFamily="Open Sans, sans-serif" fill="#666">X.Y.Z</text><path d="M8 8 16 12 13 13 15 18 12 19 10 14 8 16Z" fill={GOLD} /></Ico></Tool>
      <Tool label="Annotation"><Ico><path d="M1 1H14L17 4.500 14 8H1Z" fill="#fff" stroke={K} strokeWidth="1.300" /><path d="M4 3V6M7 3H9V6H7ZM11 3H13V6H11Z" stroke={K} /><path d="M6 8 13 11 11 12 12 16 10 17 9 13 7 14Z" fill={GOLD} /></Ico></Tool>
      <Tool label="Label"><Ico><path d="M1 2H13L17 8 13 14H1Z" fill="#d4d4d6" stroke="#999" strokeWidth="1.300" /><text x="2" y="11" fontSize="7" fontFamily="Open Sans, sans-serif" fill="#888">Abc</text><path d="M12 11 16 16" stroke="#999" strokeWidth="2" /></Ico></Tool>
      <Sep />
      <Tool label="Chart"><Ico><path d="M1 10 6 6 9 8 16 2M1 14H17" stroke="#c4c4c8" strokeWidth="1.500" /></Ico></Tool>
      <Sep />
      <button type="button" className={`${tbText} mr-[5px] ml-[3px] gap-[4px]`}>
        <Ico><path d="M1 1H17V17H1Z" fill="#e6ba3c" stroke="#4a4020" strokeWidth="1.500" /><path d="M4 3H14M9 1V4" stroke="#4a4020" strokeWidth="1.500" /></Ico>
        <span className="flex items-center gap-[3px]">Clipboard<Caret light /></span>
      </button>
      <span className={`${tbText} mr-[7px] ml-[10px]`}>[ Empty ]</span>
      <Sep />
      <button type="button" className={`${tbText} mx-[6px] gap-[4px]`}>
        <Ico><Cube x={1} y={0.500} top="#fff" left={GREEN} right="#fff" w={1.400} /><path d="M7 4.500H11M9 3V6" stroke={GOLD} strokeWidth="1.400" /></Ico>
        <span className="flex items-center gap-[2px]">Extend<Caret light /></span>
      </button>
      <button type="button" className={`${tbText} mx-[9px] gap-[3px]`}>
        <Ico><path d="M9 13Q4 7 4 5A5 5 0 0 1 14 5Q14 7 9 13Z" fill={GOLD} /><circle cx="9" cy="5" r="2" fill="#fff" /><path d="M3 13 1 17H17L15 13" stroke={K} strokeWidth="1.300" /></Ico>
        <span className="flex items-center gap-[2px]">Select By<Caret light /></span>
      </button>
      <button type="button" className={`${tbText} mx-[9px] gap-[3px]`}>
        <Ico><path d="M6 4H14L17 7V16H9L6 13Z" fill={GREEN} stroke={K} strokeWidth="1.500" /><path d="M6 4 9 7H17M9 7V16" stroke={K} strokeWidth="1.500" /><path d="M0 8H5M3 6 6 8 3 10" stroke={GOLD} strokeWidth="1.500" /></Ico>
        <span className="flex items-center gap-[3px]">Convert<Caret light /></span>
      </button>
      <span className="pt-[6px]"><Overflow /></span>
    </div>
  );
}

function Viewport() {
  return (
    <div className="relative flex min-h-0 flex-1 items-center bg-linear-to-b from-[#6b8cde] to-[#fdfdff] pb-[5px] pl-[23px]">
      <svg className="h-[68px] w-full" aria-label="Meshed body">
        <defs>
          <pattern id="mesh-cells" width="6.570" height="6.600" patternUnits="userSpaceOnUse" x="1" y="1">
            <rect width="7" height="7" fill="#949494" />
            <path d="M0 0H7M0 0V7" stroke="#0a0a0a" strokeWidth="2.600" />
          </pattern>
        </defs>
        <rect width="100%" height="100%" fill="url(#mesh-cells)" />
        <path d="M130 40.500H176M800 40.500H846M1000 40.500H1036M1242 40.500H1286M1430 40.500H1490" stroke="#222" strokeWidth="1.500" />
        <path d="M3000 .75H.75V67.250H3000" fill="none" stroke="#333a50" strokeWidth="1.500" />
      </svg>

      <div className="absolute top-[11px] right-[7px] flex w-[138px] flex-col items-end text-white">
        <div className="flex h-[43px] w-full items-start" aria-label="Ansys">
          <svg className="h-[34px] w-[40px] shrink-0" viewBox="0 0 40 34">
            <path d="M13 0H25L11 34H0Z" fill="#fff" />
            <path d="M26 1 40 34H29L20 13Z" fill="#fff" />
          </svg>
          <span className="font-['Open_Sans'] text-[44px] leading-[34px] font-bold">nsys</span>
        </div>
        <div className="text-[22px] leading-[24px] font-bold">2024 R1</div>
        <div className="mt-[4px] h-[2px] w-full bg-white/70" />
        <div className="mt-[6px] w-full pr-[12px] text-center text-[24px] leading-[24px] font-bold">STUDENT</div>
      </div>

      <div className="absolute bottom-[23px] left-1/2 w-[396px] -translate-x-1/2 text-[13px] leading-[16px] text-black">
        <div className="relative h-[17px]">
          <span className="absolute left-0 -translate-x-1/2">0</span>
          <span className="absolute left-1/2 -translate-x-1/2">0,015</span>
          <span className="absolute left-full -translate-x-[13px] whitespace-nowrap">0,03 (m)</span>
        </div>
        <div className="grid h-[13px] grid-cols-4 border border-black">
          <span className="bg-black" />
          <span />
          <span className="bg-black" />
          <span />
        </div>
        <div className="relative mt-[3px] h-[16px]">
          <span className="absolute left-1/4 -translate-x-1/2">0,0075</span>
          <span className="absolute left-3/4 -translate-x-1/2">0,022</span>
        </div>
      </div>

      <svg className="absolute right-0 bottom-[84px] h-[126px] w-[118px]" viewBox="0 0 118 126" aria-label="Axis triad">
        <defs>
          <radialGradient id="cy" cx=".6" cy=".35"><stop offset="0" stopColor="#1fe0e0" /><stop offset="1" stopColor="#0a8f92" /></radialGradient>
          <radialGradient id="bl" cx=".6" cy=".35"><stop offset="0" stopColor="#1515ff" /><stop offset="1" stopColor="#000070" /></radialGradient>
        </defs>
        <text x="9" y="17" fontSize="14" fontFamily="Open Sans, sans-serif" fill="#18b030">Y</text>
        <path d="M9 110V48" stroke="#0b8412" strokeWidth="5" />
        <path d="M9 30 17 50H1Z" fill="#0b8412" />
        <path d="M9 111H72" stroke="#c80c0c" strokeWidth="5" />
        <path d="M90 111 70 119V103Z" fill="#c80c0c" />
        <circle cx="9" cy="111" r="8" fill="url(#bl)" />
        <path d="M9 101H16L13 106" stroke="#2222ff" fill="none" />
        <circle cx="46" cy="73" r="8" fill="url(#cy)" />
        <text x="101" y="110" fontSize="14" fontFamily="Open Sans, sans-serif" fill="#f02020">X</text>
      </svg>
    </div>
  );
}

function MsgCheck({ label, count }: { label: string; count?: string }) {
  return (
    <label className="flex items-center whitespace-nowrap">
      <span className="relative mr-[7px] size-[16px]">
        <input type="checkbox" defaultChecked className="peer block size-[16px] appearance-none border border-[#cccedb] bg-white" />
        <svg className="pointer-events-none absolute top-[3px] left-[3px] hidden size-[10px] peer-checked:block" viewBox="0 0 10 10" fill="none"><path d="m1 5 3 4 5-8" stroke="#555" strokeWidth="2" /></svg>
      </span>
      {label}
      {count && <span className="ml-[11px]">{count}</span>}
    </label>
  );
}

function Messages() {
  const th = "h-[19px] overflow-hidden border-r border-b border-[#8f8f8f] bg-[#f4f4f4] px-[4px] py-0 text-left font-normal";
  return (
    <section className="flex h-[242px] shrink-0 flex-col pt-[4px]" aria-label="Messages">
      <PanelHeader title="Messages" />
      <div className="flex h-[33px] shrink-0 items-center gap-[10px] pl-[12px] text-[14px] text-[#333]">
        <Dots className="mr-[2px] h-[22px] w-[7px]" />
        <MsgCheck label="Show Errors" count="(1)" />
        <MsgCheck label="Show Warnings" count="(0)" />
        <MsgCheck label="Show Info" count="(0)" />
        <MsgCheck label="Merge Messages" />
        <MsgCheck label="Pop-up Messages" />
        <span className="-ml-[8px] pt-[4px]"><Overflow /></span>
      </div>
      <div className="min-h-0 flex-1 bg-[#a0a0a0]">
        <table className="w-[1299px] table-fixed border-collapse text-[14px] leading-[17px] text-black">
          <colgroup>
            <col className="w-[61px]" />
            <col className="w-[582px]" />
            <col className="w-[381px]" />
            <col className="w-[275px]" />
          </colgroup>
          <thead>
            <tr>
              <th className={th} aria-label="Severity" />
              <th className={th}>Text</th>
              <th className={th}>Association</th>
              <th className={th}>Timestamp</th>
            </tr>
          </thead>
          <tbody>
            <tr className="whitespace-nowrap">
              <td className="h-[18px] border-r border-b border-[#8f8f8f] bg-[#f4f4f4] px-[3px] py-0">Error</td>
              <td className="border-r border-[#ddd] bg-[#f4f4f4] px-px py-0 whitespace-pre">An exception occurred during mesh file export.  Please send your data to your support pr</td>
              <td className="border-r border-[#ddd] bg-white px-[4px] py-0 text-[#333]">Project&gt;Model&gt;Mesh</td>
              <td className="bg-white px-[4px] py-0 text-[#333]">Tuesday, February 27, 2024 3:24:35 PM</td>
            </tr>
          </tbody>
        </table>
      </div>
      <div className="flex h-[24px] shrink-0 border-t border-[#cccedb] text-[14px] leading-[20px]">
        <button type="button" className="w-[158px] pb-[2px] text-[#444]">Selection Information</button>
        <button type="button" className="w-[78px] border-x border-b border-[#cccedb] bg-[#f5f5f8] pb-[2px] text-[#0e7bd4]">Messages</button>
      </div>
    </section>
  );
}

function StatusBar() {
  return (
    <footer className="flex h-[24px] shrink-0 items-center bg-[#007acc] pr-[7px] pl-[10px] text-[14px] whitespace-nowrap text-[#d8ecfa]">
      <span>Ready</span>
      <div className="ml-auto flex items-center">
        <span className="flex w-[114px] items-center gap-[2px]">
          <Ico size="size-[20px]"><path d="M1 6H15V15H7L4 18V15H1Z" fill="#f7d36a" stroke="#a87a20" /><path d="M10 0 17 13H4Z" fill="#d41a1a" stroke="#a00" /><path d="M10.500 4V9M10.500 10.500V12" stroke="#fff" strokeWidth="1.800" /></Ico>
          1 Message
        </span>
        <span className="w-[111px]">No Selection</span>
        <button type="button" className="flex w-[192px] items-center gap-[7px]">
          <svg className="h-[6px] w-[10px]" viewBox="0 0 10 6"><path d="M0 6H10L5 0Z" fill="#fff" /></svg>
          Metric (m, kg, N, s, V, A)
        </button>
        <span className="w-[68px]">Degrees</span>
        <span className="w-[50px]">rad/s</span>
        <span>Celsius</span>
      </div>
    </footer>
  );
}

export default function App() {
  return (
    <div className="flex h-screen w-full flex-col overflow-hidden bg-[#eeeef2] font-['Open_Sans','Noto_Sans',sans-serif]">
      <TitleBar />
      <TabRow />
      <Ribbon />
      <main className="flex min-h-0 flex-1">
        <aside className="mr-[5px] flex w-[404px] shrink-0 flex-col">
          <Outline />
          <div className="h-[4px] shrink-0" />
          <Details />
        </aside>
        <div className="flex min-w-0 flex-1 flex-col">
          <GraphicsToolbar />
          <Viewport />
          <Messages />
        </div>
      </main>
      <StatusBar />
    </div>
  );
}
